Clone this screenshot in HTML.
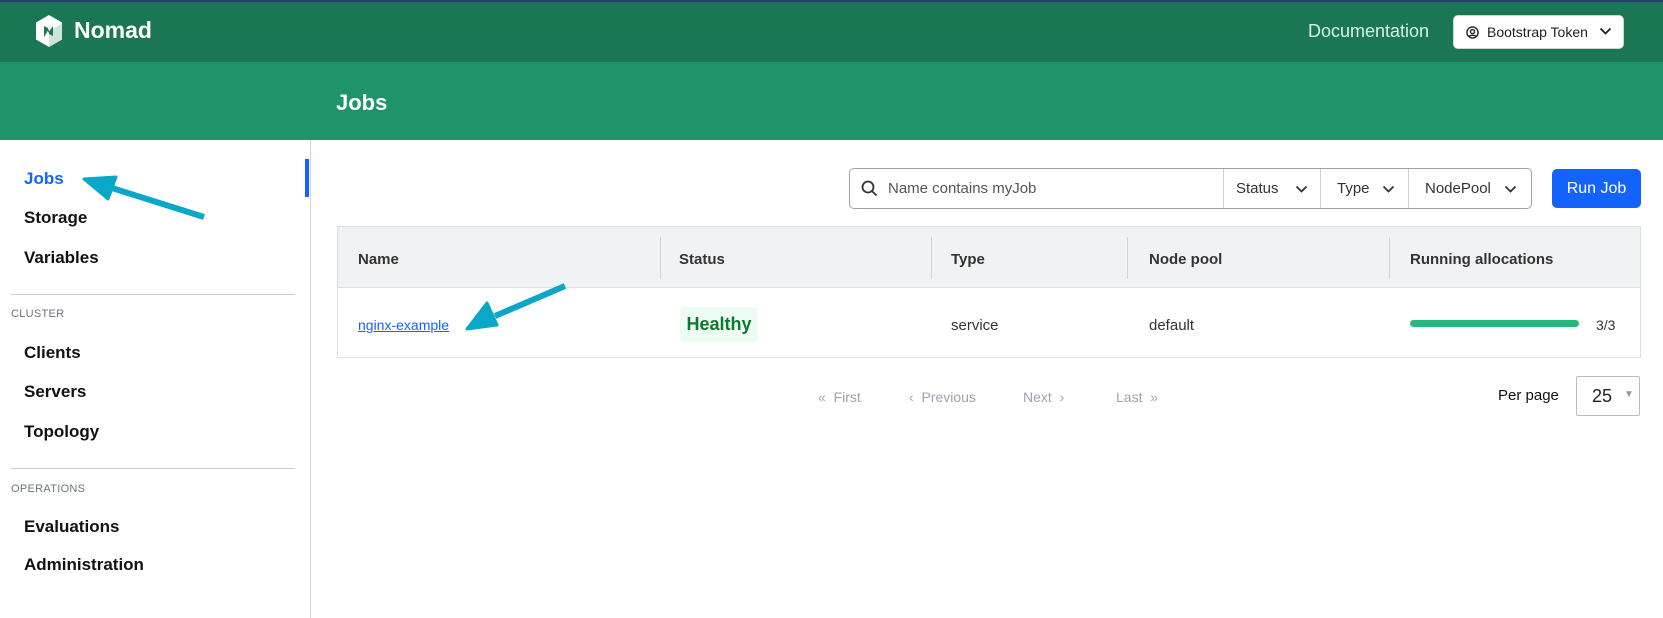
<!DOCTYPE html>
<html><head><meta charset="utf-8"><style>
*{margin:0;padding:0;box-sizing:border-box}
body{width:1663px;height:618px;overflow:hidden;background:#fff;font-family:"Liberation Sans",sans-serif;color:#1f2124;position:relative}
.a{position:absolute;white-space:nowrap}
.top{left:0;top:0;width:1663px;height:62px;background:#1b7753;border-top:2px solid #2a3f6a}
.sub{left:0;top:62px;width:1663px;height:78px;background:#1e9468}
.side{font-size:17px;font-weight:bold;color:#111}
.sec{font-size:11px;color:#6b7280;letter-spacing:.3px}
.th{font-size:15px;color:#333;font-weight:bold}
.pg{font-size:14px;color:#9ca3af}
</style></head><body>
<div class="a top"></div>
<div class="a sub"></div>
<svg class="a" style="left:36px;top:15px" width="26" height="32" viewBox="0 0 26 32"><path d="M13 0L26 7.5V24.5L13 32L0 24.5V7.5Z" fill="#fff"/><path d="M13 16L26 8.5V24.5L13 32Z" fill="#cfe3da"/><path d="M8 22V11l4 2 0 5 5-7v10l-4-2v-5l-5 8z" fill="#1b7753"/></svg>
<div class="a" style="left:74px;top:17px;font-size:23px;font-weight:bold;color:#fff">Nomad</div>
<div class="a" style="left:1308px;top:21px;font-size:18px;color:#d7f3e6">Documentation</div>
<div class="a" style="left:1453px;top:15px;width:171px;height:34px;background:#fff;border-radius:5px;border:1px solid #cfd6d3;font-size:14px;color:#222;padding:8px 0 0 33px">Bootstrap Token</div>
<svg class="a" style="left:1466px;top:26px" width="13" height="13" viewBox="0 0 14 14" fill="none" stroke="#222" stroke-width="1.5"><circle cx="7" cy="7" r="6"/><circle cx="7" cy="6" r="2.2"/><path d="M3 11.5c1.5-2 6.5-2 8 0"/></svg>
<svg class="a" style="left:1599px;top:27px" width="13" height="9" viewBox="0 0 13 9"><path d="M1.5 1.5l5 5 5-5" fill="none" stroke="#222" stroke-width="1.8"/></svg>
<div class="a" style="left:336px;top:90px;font-size:22px;font-weight:bold;color:#fff">Jobs</div>

<div class="a" style="left:310px;top:140px;width:1px;height:478px;background:#d1d5db"></div>
<div class="a" style="left:305px;top:159px;width:4px;height:38px;background:#1563ff"></div>
<div class="a side" style="left:24px;top:169px;color:#1563ff">Jobs</div>
<div class="a side" style="left:24px;top:208px">Storage</div>
<div class="a side" style="left:24px;top:248px">Variables</div>
<div class="a" style="left:11px;top:294px;width:284px;height:1px;background:#ccc"></div>
<div class="a sec" style="left:11px;top:308px">CLUSTER</div>
<div class="a side" style="left:24px;top:343px">Clients</div>
<div class="a side" style="left:24px;top:382px">Servers</div>
<div class="a side" style="left:24px;top:422px">Topology</div>
<div class="a" style="left:11px;top:468px;width:284px;height:1px;background:#ccc"></div>
<div class="a sec" style="left:11px;top:483px">OPERATIONS</div>
<div class="a side" style="left:24px;top:517px">Evaluations</div>
<div class="a side" style="left:24px;top:555px">Administration</div>

<div class="a" style="left:849px;top:168px;width:683px;height:41px;border:1px solid #9ca3af;border-radius:5px"></div>
<div class="a" style="left:1223px;top:169px;width:1px;height:39px;background:#cbd0d6"></div>
<div class="a" style="left:1320px;top:169px;width:1px;height:39px;background:#cbd0d6"></div>
<div class="a" style="left:1408px;top:169px;width:1px;height:39px;background:#cbd0d6"></div>
<svg class="a" style="left:861px;top:180px" width="17" height="17" viewBox="0 0 17 17" fill="none" stroke="#333" stroke-width="1.8"><circle cx="7" cy="7" r="5.5"/><path d="M11 11l4.5 4.5"/></svg>
<div class="a" style="left:888px;top:180px;font-size:15px;color:#555">Name contains myJob</div>
<div class="a" style="left:1236px;top:180px;font-size:15px;color:#333">Status</div>
<div class="a" style="left:1337px;top:180px;font-size:15px;color:#333">Type</div>
<div class="a" style="left:1425px;top:180px;font-size:15px;color:#333">NodePool</div>
<svg class="a" style="left:1295px;top:185px" width="13" height="9" viewBox="0 0 13 9"><path d="M1.5 1.5l5 5 5-5" fill="none" stroke="#333" stroke-width="1.8"/></svg>
<svg class="a" style="left:1382px;top:185px" width="13" height="9" viewBox="0 0 13 9"><path d="M1.5 1.5l5 5 5-5" fill="none" stroke="#333" stroke-width="1.8"/></svg>
<svg class="a" style="left:1504px;top:185px" width="13" height="9" viewBox="0 0 13 9"><path d="M1.5 1.5l5 5 5-5" fill="none" stroke="#333" stroke-width="1.8"/></svg>
<div class="a" style="left:1552px;top:169px;width:89px;height:39px;background:#1563ff;border-radius:5px;color:#fff;font-size:16px;text-align:center;line-height:39px">Run Job</div>

<div class="a" style="left:337px;top:226px;width:1304px;height:132px;border:1px solid #dcdfe3"></div>
<div class="a" style="left:338px;top:227px;width:1302px;height:61px;background:#f1f2f4;border-bottom:1px solid #dcdfe3"></div>
<div class="a" style="left:660px;top:237px;width:1px;height:42px;background:#d1d5db"></div>
<div class="a" style="left:931px;top:237px;width:1px;height:42px;background:#d1d5db"></div>
<div class="a" style="left:1127px;top:237px;width:1px;height:42px;background:#d1d5db"></div>
<div class="a" style="left:1389px;top:237px;width:1px;height:42px;background:#d1d5db"></div>
<div class="a th" style="left:358px;top:251px">Name</div>
<div class="a th" style="left:679px;top:251px">Status</div>
<div class="a th" style="left:951px;top:251px">Type</div>
<div class="a th" style="left:1149px;top:251px">Node pool</div>
<div class="a th" style="left:1410px;top:251px">Running allocations</div>
<div class="a" style="left:358px;top:317px;font-size:14px;color:#1563ff;text-decoration:underline">nginx-example</div>
<div class="a" style="left:680px;top:307px;width:78px;height:35px;background:#eefbf3;border-radius:4px;color:#0b7a2e;font-weight:bold;font-size:18px;text-align:center;line-height:35px">Healthy</div>
<div class="a" style="left:951px;top:317px;font-size:15px;color:#333">service</div>
<div class="a" style="left:1149px;top:317px;font-size:15px;color:#333">default</div>
<div class="a" style="left:1410px;top:320px;width:169px;height:7px;background:#25b77c;border-radius:4px"></div>
<div class="a" style="left:1596px;top:317px;font-size:14px;color:#333">3/3</div>

<div class="a pg" style="left:818px;top:389px">« &nbsp;First</div>
<div class="a pg" style="left:909px;top:389px">‹ &nbsp;Previous</div>
<div class="a pg" style="left:1023px;top:389px">Next &nbsp;›</div>
<div class="a pg" style="left:1116px;top:389px">Last &nbsp;»</div>
<div class="a" style="left:1498px;top:387px;font-size:15px;color:#111">Per page</div>
<div class="a" style="left:1576px;top:376px;width:64px;height:40px;border:1px solid #bbb;border-radius:2px;font-size:18px;color:#222;padding:9px 0 0 15px">25</div>
<div class="a" style="left:1624px;top:389px;font-size:10px;color:#999">▼</div>

<svg class="a" style="left:0;top:0" width="1663" height="618" viewBox="0 0 1663 618">
<g fill="#0aa7c9" stroke="#0aa7c9">
<path d="M204 217L112 188" stroke-width="6"/><path d="M84 179l32-2-8 22z" stroke-width="3" stroke-linejoin="round"/>
<path d="M565 286L495 316" stroke-width="6"/><path d="M467 329l20-26 10 22z" stroke-width="3" stroke-linejoin="round"/>
</g></svg>
</body></html>
